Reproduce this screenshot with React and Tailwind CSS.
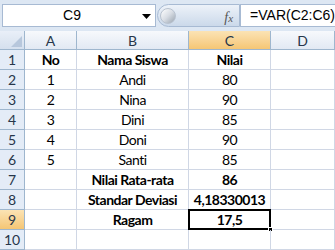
import React from 'react';

const cols = ['A', 'B', 'C', 'D'];

const rows = [
  { n: 1, a: 'No', b: 'Nama Siswa', c: 'Nilai', bold: true },
  { n: 2, a: '1', b: 'Andi', c: '80' },
  { n: 3, a: '2', b: 'Nina', c: '90' },
  { n: 4, a: '3', b: 'Dini', c: '85' },
  { n: 5, a: '4', b: 'Doni', c: '90' },
  { n: 6, a: '5', b: 'Santi', c: '85' },
  { n: 7, a: '', b: 'Nilai Rata-rata', c: '86', bold: true },
  { n: 8, a: '', b: 'Standar Deviasi', c: '4,18330013', bold: true },
  { n: 9, a: '', b: 'Ragam', c: '17,5', bold: true, active: true },
  { n: 10, a: '', b: '', c: '' },
];

export default function App() {
  return (
    <div className="w-[335px] h-[250px] overflow-hidden bg-white font-['Liberation_Sans',sans-serif] text-black">
      {/* formula bar */}
      <div className="h-[31px] bg-[#dde7f3] flex items-start pt-[4px] pl-[2px]">
        <div className="w-[156px] h-[23px] bg-white border border-[#a7bad3] flex items-center relative">
          <span className="flex-1 text-center text-[14px] pr-[14px]">C9</span>
          <svg width="9" height="5" viewBox="0 0 9 5" className="absolute right-[4px] top-[9px]">
            <path d="M0 0 H9 L4.5 5 Z" fill="#000" />
          </svg>
        </div>
        <div className="w-[84px] h-[23px] ml-[1px] rounded-l-full bg-gradient-to-b from-[#edf2f9] to-[#cbd9ea] border border-[#a7bad3] flex items-center relative">
          <div className="w-[16px] h-[16px] ml-[2px] rounded-full bg-gradient-to-br from-[#ffffff] via-[#d8dde4] to-[#9aa4b0] border border-[#b8c2cf]" />
          <span className="absolute right-[6px] top-[2px] text-[14px] italic font-['Liberation_Serif',serif] text-[#555]">f<span className="text-[11px]">x</span></span>
        </div>
        <div className="flex-1 h-[23px] bg-white border border-[#a7bad3] border-r-0 flex items-center pl-[9px] text-[14px]">
          =VAR(C2:C6)
        </div>
      </div>

      {/* sheet */}
      <div className="grid grid-cols-[25px_52px_112px_82px_64px] grid-rows-[19px_repeat(10,20px)] text-[14px] tracking-[-0.5px] font-['Lato',sans-serif]">
        <div className="bg-gradient-to-b from-[#e9eff8] to-[#d5e0ee] border-r border-b border-[#9eb6ce] relative">
          <svg width="11" height="11" viewBox="0 0 11 11" className="absolute right-[2px] bottom-[2px]">
            <path d="M11 0 V11 H0 Z" fill="#b7c7dc" />
          </svg>
        </div>
        {cols.map((c) => (
          <div
            key={c}
            className={`flex items-center justify-center border-r border-b border-[#9eb6ce] text-[#27364a] tracking-normal ${
              c === 'C'
                ? 'bg-gradient-to-b from-[#fbe3b4] to-[#f5c674]'
                : 'bg-gradient-to-b from-[#f7f9fc] to-[#e2e9f3]'
            }`}
          >
            {c}
          </div>
        ))}

        {rows.map((r) => (
          <React.Fragment key={r.n}>
            <div
              className={`flex items-center justify-center border-r border-b border-[#9eb6ce] text-[#27364a] tracking-normal ${
                r.active ? 'bg-gradient-to-b from-[#fbe3b4] to-[#f5c674]' : 'bg-[#e4ecf7]'
              }`}
            >
              {r.n}
            </div>
            <div className={`flex items-center justify-center border-r border-b border-[#d0d7e5] ${r.bold && r.n === 1 ? 'font-bold' : ''}`}>
              {r.a}
            </div>
            <div className={`flex items-center justify-center border-r border-b border-[#d0d7e5] ${r.bold ? 'font-bold' : ''}`}>
              {r.b}
            </div>
            <div className={`flex items-center justify-center border-r border-b border-[#d0d7e5] relative ${r.bold ? 'font-bold' : ''}`}>
              {r.c}
              {r.active && (
                <div className="absolute left-[-1px] top-[-1px] right-[-1px] bottom-[-1px] border-2 border-black">
                  <div className="absolute right-[-4px] bottom-[-4px] w-[5px] h-[5px] bg-black border border-white" />
                </div>
              )}
            </div>
            <div className="border-r border-b border-[#d0d7e5]" />
          </React.Fragment>
        ))}
      </div>
    </div>
  );
}
